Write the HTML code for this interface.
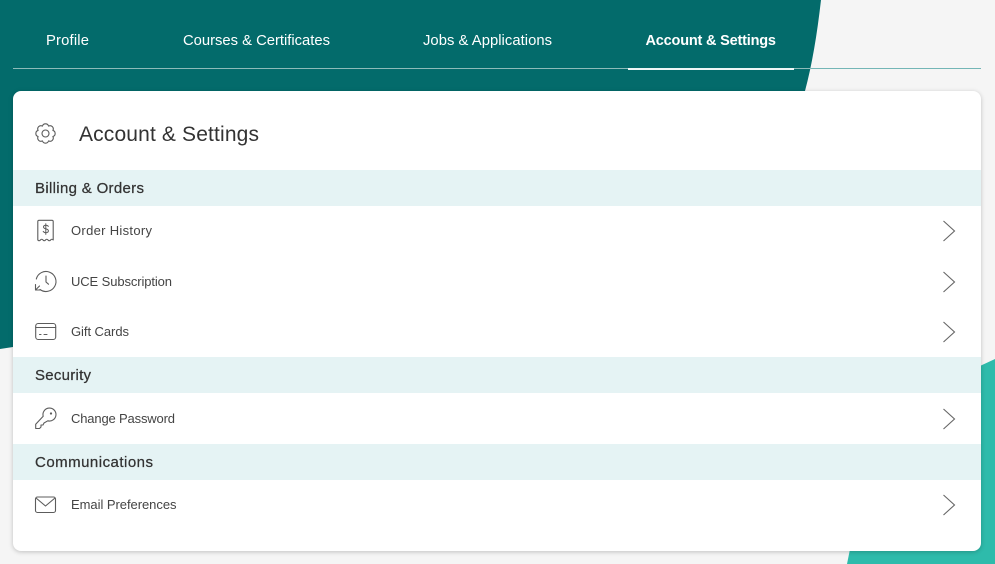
<!DOCTYPE html>
<html lang="en">
<head>
<meta charset="utf-8">
<title>Account &amp; Settings</title>
<style>
html,body{margin:0;padding:0;background:#f5f5f5;}
body{width:995px;height:564px;overflow:hidden;position:relative;font-family:"Liberation Sans",sans-serif;}
svg{position:absolute;left:0;top:0;display:block;}
.bg{position:absolute;left:0;top:0;}
.card{position:absolute;left:13px;top:91px;width:968px;height:460px;background:#fff;border-radius:8px;box-shadow:0 1px 5px rgba(0,0,0,.22);overflow:hidden;}
.band{position:absolute;left:0;width:968px;height:36px;background:#e5f3f4;}
text{font-family:"Liberation Sans",sans-serif;}
.nav{font-size:14.800px;fill:#fff;}
.sec{font-size:15px;fill:#333;stroke:#333;stroke-width:.25px;}
.item{font-size:13px;fill:#444;}
.ic{fill:none;stroke:#5c5c5c;stroke-width:1.1;stroke-linecap:round;stroke-linejoin:round;}
.ch{fill:none;stroke:#666;stroke-width:1.1;}
</style>
</head>
<body>
<svg class="bg" width="995" height="564" viewBox="0 0 995 564">
  <path d="M0 0H821C817 35 812 65 805 91L780 200L13 347L0 349Z" fill="#036b6b"/>
  <path d="M981 365.500L995 359V564H847L860 500L900 420Z" fill="#2ebbab"/>
  <rect x="13" y="68" width="798" height="1" fill="#8dbbb9"/>
  <rect x="811" y="68" width="170" height="1" fill="#74b6b6"/>
  <rect x="628" y="68" width="166" height="2" fill="#eef6f6"/>
</svg>
<div class="card">
  <div class="band" style="top:79px"></div>
  <div class="band" style="top:266px"></div>
  <div class="band" style="top:353px"></div>
</div>
<svg width="995" height="564" viewBox="0 0 995 564">
  <text class="nav" x="46" y="45" textLength="43">Profile</text>
  <text class="nav" x="183" y="45" textLength="147">Courses &amp; Certificates</text>
  <text class="nav" x="423" y="45" textLength="129">Jobs &amp; Applications</text>
  <text class="nav" x="645.500" y="45" textLength="130.500" font-weight="700" style="font-size:14.500px">Account &amp; Settings</text>

  <text x="79" y="141" font-size="21" fill="#333" textLength="180">Account &amp; Settings</text>
  <text class="sec" x="35" y="193" textLength="109">Billing &amp; Orders</text>
  <text class="sec" x="35" y="380" textLength="56">Security</text>
  <text class="sec" x="35" y="467" textLength="118">Communications</text>

  <text class="item" x="71" y="235" textLength="81">Order History</text>
  <text class="item" x="71" y="286" textLength="101">UCE Subscription</text>
  <text class="item" x="71" y="336" textLength="58">Gift Cards</text>
  <text class="item" x="71" y="423" textLength="104">Change Password</text>
  <text class="item" x="71" y="509" textLength="105.500">Email Preferences</text>

  <!-- gear -->
  <g class="ic">
    <circle cx="45.500" cy="133.500" r="3.500"/>
    <path d="M52.890 136.560A3.200 3.200 0 0 1 48.560 140.890A3.200 3.200 0 0 1 42.440 140.890A3.200 3.200 0 0 1 38.110 136.560A3.200 3.200 0 0 1 38.110 130.440A3.200 3.200 0 0 1 42.440 126.110A3.200 3.200 0 0 1 48.560 126.110A3.200 3.200 0 0 1 52.890 130.440A3.200 3.200 0 0 1 52.890 136.560Z"/>
  </g>
  <!-- receipt -->
  <g class="ic">
    <path d="M37.800 240V221.500Q37.800 220.300 39 220.300H52Q53.200 220.300 53.200 221.500V240Q51.900 238.500 50.600 240T48 240T45.500 240T43 240T40.400 240T37.800 240Z"/>
    <path d="M48.300 226.300c-.5-.8-1.500-1.100-2.500-1.100-1.300 0-2.300.7-2.300 1.800 0 2.500 4.900 1.300 4.900 3.800 0 1.200-1.100 1.900-2.500 1.900-1.200 0-2.200-.4-2.700-1.300M45.800 223.800v10.600" stroke-width="1"/>
  </g>
  <!-- history -->
  <g class="ic">
    <path d="M36.300 279A10 10 0 1 1 40 289.500"/>
    <path d="M35.500 284.500V290H41M35.500 290L39.500 286"/>
    <path d="M46 276V282L48.500 284.200"/>
  </g>
  <!-- card -->
  <g class="ic">
    <rect x="35.700" y="323.500" width="20" height="16" rx="2.500"/>
    <path d="M35.700 327.500H55.700M39.500 334.500H41M44 334.500H47"/>
  </g>
  <!-- key -->
  <g class="ic">
    <path d="M43.200 416.200L35.700 424.200V428.500H39.500L41 427V425H43L44 423L47.800 420.800A6.500 6.500 0 1 0 43.200 416.200Z"/>
    <circle cx="51" cy="413.500" r=".6"/>
  </g>
  <!-- mail -->
  <g class="ic">
    <rect x="35.500" y="497" width="20" height="15.500" rx="2"/>
    <path d="M36 498L45.500 506L55 498"/>
  </g>
  <!-- chevrons -->
  <path class="ch" d="M943.500 221L954.500 231L943.500 241"/>
  <path class="ch" d="M943.500 272L954.500 282L943.500 292"/>
  <path class="ch" d="M943.500 322L954.500 332L943.500 342"/>
  <path class="ch" d="M943.500 409L954.500 419L943.500 429"/>
  <path class="ch" d="M943.500 495L954.500 505L943.500 515"/>
</svg>
</body>
</html>
